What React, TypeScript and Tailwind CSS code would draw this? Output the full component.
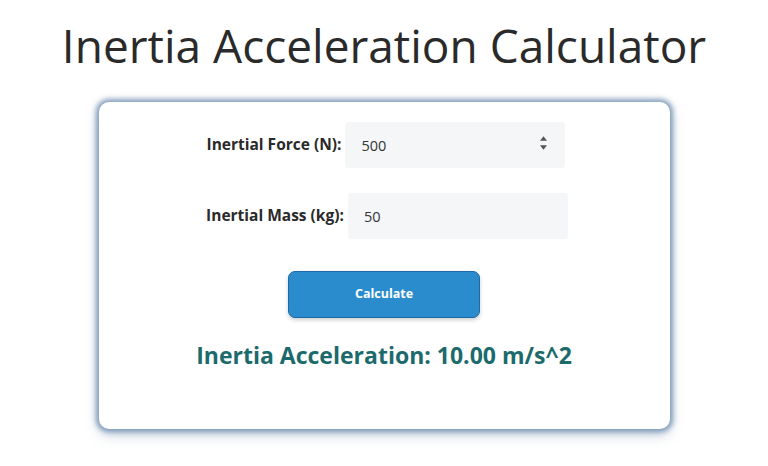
import React, { useState } from "react";

const App = () => {
  const [force, setForce] = useState("500");
  const [mass, setMass] = useState("50");
  const [result, setResult] = useState("10.00");

  const handleCalculate = () => {
    const f = parseFloat(force);
    const m = parseFloat(mass);
    if (!isNaN(f) && !isNaN(m) && m !== 0) {
      setResult((f / m).toFixed(2));
    }
  };

  return (
    <div className="min-h-[466px] w-full bg-white font-['Open_Sans',sans-serif] text-[#222]">
      <h1 className="pt-[14px] text-center text-[46px] font-normal leading-[62px] text-[#2a2a2a]">
        Inertia Acceleration Calculator
      </h1>

      <div className="mx-auto mt-[26px] w-[571px] rounded-[10px] bg-white pt-[20px] pb-[56px] shadow-[0_0_5px_3px_rgba(110,140,175,0.8),0_5px_14px_rgba(96,128,166,0.4)]">
        {/* inputs */}
        <div className="flex flex-col items-center gap-[25px]">
          <div className="flex items-center gap-[4px] pl-[4px]">
            <label className="text-right text-[15.5px] font-bold text-[#2a2a2a]">
              Inertial Force (N):
            </label>
            <div className="relative">
              <input
                type="text"
                value={force}
                onChange={(e) => setForce(e.target.value)}
                className="h-[46px] w-[220px] rounded-[3px] bg-[#f4f6f8] px-[16px] text-[14.5px] text-[#333] outline-none"
              />
              {/* spinner */}
              <div className="absolute right-[18px] top-[14px] flex flex-col items-center gap-[4px]">
                <svg width="7" height="5" viewBox="0 0 8 5">
                  <path d="M4 0 L8 5 L0 5 Z" fill="#555" />
                </svg>
                <svg width="7" height="5" viewBox="0 0 8 5">
                  <path d="M0 0 L8 0 L4 5 Z" fill="#555" />
                </svg>
              </div>
            </div>
          </div>

          <div className="flex items-center gap-[4px] pl-[6px]">
            <label className="text-right text-[15.5px] font-bold text-[#2a2a2a]">
              Inertial Mass (kg):
            </label>
            <input
              type="text"
              value={mass}
              onChange={(e) => setMass(e.target.value)}
              className="h-[46px] w-[220px] rounded-[3px] bg-[#f4f6f8] px-[16px] text-[14.5px] text-[#333] outline-none"
            />
          </div>
        </div>

        <div className="mt-[32px] flex justify-center">
          <button
            onClick={handleCalculate}
            className="h-[47px] w-[192px] rounded-[7px] border border-[#1f6aa6] bg-[#2a8ccc] text-[12.5px] font-bold text-white shadow-[0_2px_4px_rgba(0,0,0,0.2)]"
          >
            Calculate
          </button>
        </div>

        <div className="mt-[20px] text-center text-[23px] font-bold text-[#1c6a6c]">
          Inertia Acceleration: {result} m/s^2
        </div>
      </div>
    </div>
  );
};

export default App;
